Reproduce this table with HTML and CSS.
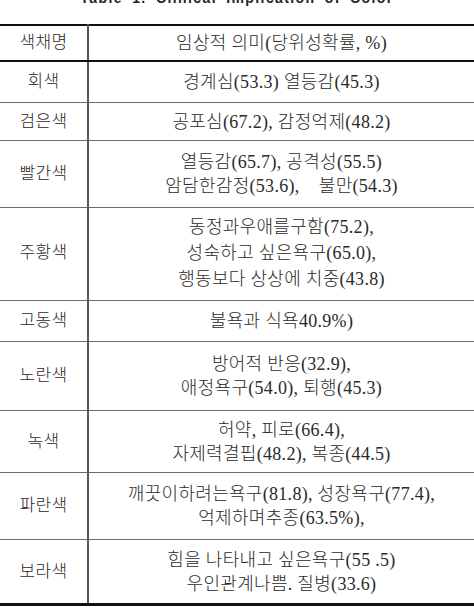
FILE: index.html
```html
<!DOCTYPE html>
<html lang="ko">
<head>
<meta charset="utf-8">
<title>Table 1. Clinical Implication of Color</title>
<link rel="stylesheet" href="styles.css">
</head>
<body>
<div class="caption">Table 1. Clinical Implication of Color</div>
<table class="tbl">
  <thead>
    <tr><th class="c1">색채명</th><th class="c2">임상적 의미(당위성확률, %)</th></tr>
  </thead>
  <tbody>
    <tr class="r-gray"><td class="c1">회색</td><td class="c2">경계심(53.3) 열등감(45.3)</td></tr>
    <tr class="r-black"><td class="c1">검은색</td><td class="c2">공포심(67.2), 감정억제(48.2)</td></tr>
    <tr class="r-red"><td class="c1">빨간색</td><td class="c2">열등감(65.7), 공격성(55.5)<br>암담한감정(53.6),&nbsp;&nbsp;&nbsp;&nbsp;불만(54.3)</td></tr>
    <tr class="r-orange"><td class="c1">주황색</td><td class="c2">동정과우애를구함(75.2),<br>성숙하고 싶은욕구(65.0),<br>행동보다 상상에 치중(43.8)</td></tr>
    <tr class="r-brown"><td class="c1">고동색</td><td class="c2">불욕과 식욕40.9%)</td></tr>
    <tr class="r-yellow"><td class="c1">노란색</td><td class="c2">방어적 반응(32.9),<br>애정욕구(54.0), 퇴행(45.3)</td></tr>
    <tr class="r-green"><td class="c1">녹색</td><td class="c2">허약, 피로(66.4),<br>자제력결핍(48.2), 복종(44.5)</td></tr>
    <tr class="r-blue"><td class="c1">파란색</td><td class="c2">깨끗이하려는욕구(81.8), 성장욕구(77.4),<br>억제하며추종(63.5%),</td></tr>
    <tr class="r-purple"><td class="c1">보라색</td><td class="c2">힘을 나타내고 싶은욕구(55 .5)<br>우인관계나쁨. 질병(33.6)</td></tr>
  </tbody>
</table>
</body>
</html>
```

FILE: styles.css
```css
html, body {
  margin: 0;
  padding: 0;
  background: #ffffff;
}
body {
  width: 474px;
  height: 608px;
  overflow: hidden;
  color: #222222;
}
.caption {
  font-family: "Liberation Sans", Arial, sans-serif;
  font-weight: bold;
  font-size: 14px;
  line-height: 16px;
  letter-spacing: 1.4px;
  word-spacing: 4px;
  color: #222;
  text-align: center;
  margin: -10px 0 18px 0;
}
.tbl {
  width: 474px;
  border-collapse: collapse;
  font-family: "Liberation Serif", "Noto Sans CJK KR", serif;
  font-size: 17px;
  line-height: 24px;
  font-weight: 300;
  letter-spacing: 0.3px;
  color: #2a2a2a;
}
.tbl th, .tbl td {
  text-align: center;
  vertical-align: middle;
  font-weight: 300;
  padding: 7px 4px;
  border-top: 1px solid #6a6a6a;
  border-bottom: 1px solid #6a6a6a;
}
.tbl thead th {
  border-top: 2px solid #111;
  border-bottom: 2px solid #111;
  padding: 5px 4px 5px;
}
.c1 {
  width: 79px;
  border-right: 2px solid #555;
}
.c2 {
  font-size: 18px;
  border-left: 2px solid #555;
}
.r-gray td { padding-top: 8px; padding-bottom: 8px; }
.r-black td { padding-top: 7px; padding-bottom: 6px; }
.r-red td { padding-top: 9px; padding-bottom: 9px; }
.r-orange td { line-height: 26px; padding-top: 6px; padding-bottom: 8px; }
.r-brown td { padding-top: 8px; padding-bottom: 8px; }
.r-yellow td { padding-top: 10px; padding-bottom: 10px; }
.r-green td { padding-top: 7px; padding-bottom: 6px; }
.r-blue td { padding-top: 9px; padding-bottom: 9px; }
.r-purple td { padding-top: 8px; padding-bottom: 7px; border-bottom: 3px solid #111; }
```
